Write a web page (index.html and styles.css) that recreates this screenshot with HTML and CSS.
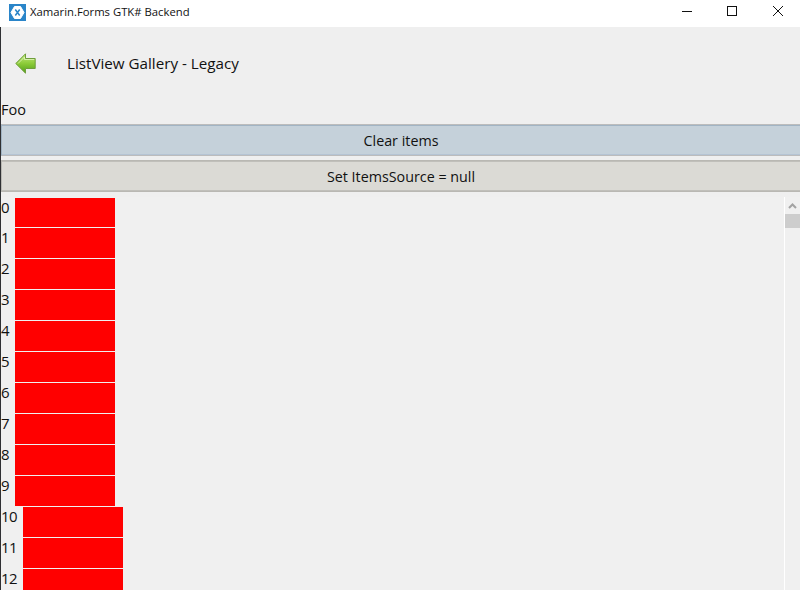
FILE: index.html
```html
<!DOCTYPE html>
<html lang="en">
<head>
    <meta charset="UTF-8">
    <title>Xamarin.Forms GTK# Backend</title>
    <link rel="stylesheet" href="styles.css">
</head>
<body>
    <div class="titlebar">
        <svg class="app-icon" width="17" height="17" viewBox="0 0 17 17">
            <rect width="17" height="17" fill="#2a85c9"/>
            <path d="M5.500 2.500h6L15 8.500l-3.500 6h-6L2 8.500z" fill="#fff" stroke="#fff" stroke-linejoin="round"/>
            <path d="M6.300 5.500l4.400 6M10.700 5.500l-4.400 6" stroke="#2a85c9" stroke-width="1.500"/>
        </svg>
        <span class="window-title">Xamarin.Forms GTK# Backend</span>
        <div class="window-buttons">
            <svg width="46" height="24" viewBox="0 0 46 24"><path d="M20 11.500h10" stroke="#111" fill="none"/></svg>
            <svg width="46" height="24" viewBox="0 0 46 24"><rect x="19.500" y="6.500" width="9" height="9" stroke="#111" fill="none"/></svg>
            <svg width="46" height="24" viewBox="0 0 46 24"><path d="M19 6l10 10M29 6L19 16" stroke="#111" fill="none"/></svg>
        </div>
    </div>

    <div class="page">
        <div class="navbar">
            <svg class="back-icon" width="21" height="21" viewBox="0 0 21 21">
                <defs>
                    <linearGradient id="arrow-fill" x1="0" y1="0" x2="0" y2="1">
                        <stop offset="0" stop-color="#c4ea80"/>
                        <stop offset="0.500" stop-color="#8ccb38"/>
                        <stop offset="1" stop-color="#50a018"/>
                    </linearGradient>
                </defs>
                <path d="M.8 10.500L10.500 .8v4.700h9.700v10h-9.700v4.700z" fill="url(#arrow-fill)" stroke="#6f9e3c"/>
                <path d="M3 10.500l6.500-6.500v2.500h9.700" fill="none" stroke="#e2f5bd" stroke-width=".8"/>
            </svg>
            <span class="nav-title">ListView Gallery - Legacy</span>
        </div>

        <div class="foo">Foo</div>
        <button class="btn btn-clear">Clear items</button>
        <button class="btn btn-null">Set ItemsSource = null</button>

        <div class="list-wrap">
            <div class="list">
                <div class="row first"><span>0</span><div class="box"></div></div>
                <div class="row"><span>1</span><div class="box"></div></div>
                <div class="row"><span>2</span><div class="box"></div></div>
                <div class="row"><span>3</span><div class="box"></div></div>
                <div class="row"><span>4</span><div class="box"></div></div>
                <div class="row"><span>5</span><div class="box"></div></div>
                <div class="row"><span>6</span><div class="box"></div></div>
                <div class="row"><span>7</span><div class="box"></div></div>
                <div class="row"><span>8</span><div class="box"></div></div>
                <div class="row"><span>9</span><div class="box"></div></div>
                <div class="row"><span>10</span><div class="box"></div></div>
                <div class="row"><span>11</span><div class="box"></div></div>
                <div class="row"><span>12</span><div class="box"></div></div>
            </div>
            <div class="scrollbar">
                <svg class="scroll-up" width="9" height="6" viewBox="0 0 9 6"><path d="M1 5l3.500-3.500L8 5" stroke="#a3a3a3" stroke-width="2" fill="none"/></svg>
                <div class="thumb"></div>
            </div>
        </div>
    </div>
</body>
</html>
```

FILE: styles.css
```css
html, body {
    height: 100%;
}
body {
    margin: 0;
    display: flex;
    flex-direction: column;
    overflow: hidden;
    font-family: "Open Sans", "Noto Sans", sans-serif;
    color: #111;
    background-color: #efefef;
}
.titlebar {
    display: flex;
    align-items: center;
    height: 27px;
    flex-shrink: 0;
    padding-left: 9px;
    background-color: #fff;
}
.app-icon {
    margin-right: 4px;
    margin-top: -2px;
}
.window-title {
    font-size: 11.3px;
    margin-top: -4px;
}
.window-buttons {
    display: flex;
    margin-left: auto;
    margin-top: -3px;
}
.page {
    flex: 1;
    display: flex;
    flex-direction: column;
    min-height: 0;
    border-left: 1px solid #2f3033;
}
.navbar {
    display: flex;
    align-items: center;
    height: 73px;
    flex-shrink: 0;
}
.back-icon {
    margin-left: 14px;
    margin-top: -1px;
}
.nav-title {
    margin-left: 31px;
    margin-top: -2px;
    font-size: 15.2px;
}
.foo {
    height: 24px;
    line-height: 20px;
    font-size: 14.5px;
}
.btn {
    display: block;
    width: 100%;
    height: 32px;
    flex-shrink: 0;
    padding: 0;
    font-family: inherit;
    font-size: 14.3px;
    color: #111;
    border-style: solid;
    border-width: 1px 0 1px 1px;
}
.btn-clear {
    margin-bottom: 4px;
    background-color: #c5d1da;
    border-color: #bcbcbc;
    border-left-color: #a1b4c4;
    box-shadow: inset 0 1px 0 #a1b4c4, inset 0 -1px 0 #b5c4d4;
}
.btn-null {
    background-color: #dbdad5;
    border-color: #b9b8b3;
    box-shadow: inset 0 1px 0 #c0bfba, inset 0 -1px 0 #c0bfba;
}
.list-wrap {
    flex: 1;
    display: flex;
    min-height: 0;
    margin-top: 5px;
    background-color: #f0f0f0;
}
.list {
    flex: 1;
    overflow: hidden;
    padding-top: 1px;
}
.row {
    display: flex;
    height: 30px;
    margin-bottom: 1px;
    font-size: 15px;
    line-height: 18px;
}
.row.first {
    height: 29px;
}
.row span {
    margin-right: 6px;
    letter-spacing: -0.58px;
}
.box {
    width: 100px;
    background-color: #f00;
}
.scrollbar {
    position: relative;
    width: 15px;
    flex-shrink: 0;
    border-left: 1px solid #fff;
}
.scroll-up {
    position: absolute;
    left: 3px;
    top: 6px;
}
.thumb {
    position: absolute;
    top: 17px;
    left: 0;
    right: 0;
    height: 14px;
    background-color: #cdcdcd;
}
```
